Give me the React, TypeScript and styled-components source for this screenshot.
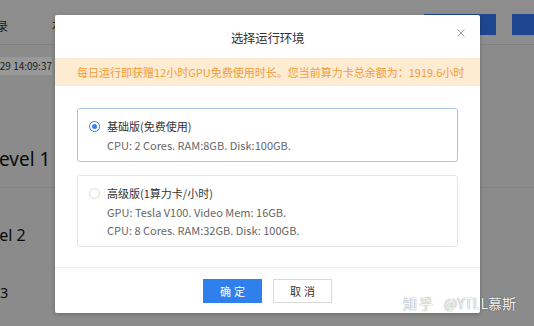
import styled, { createGlobalStyle } from "styled-components";

const GlobalStyle = createGlobalStyle`
  html, body {
    margin: 0;
    padding: 0;
  }
  body {
    font-family: "Noto Sans CJK SC", "Noto Sans", sans-serif;
    width: 534px;
    height: 326px;
    overflow: hidden;
  }
`;

const Page = styled.div`
  position: relative;
  width: 534px;
  height: 326px;
  background: #e8e8e8;
  overflow: hidden;
`;

const Header = styled.div`
  height: 44px;
  border-bottom: 1px solid #d6d6d6;
  background: #ececec;
  display: flex;
  align-items: center;
`;

const Tab = styled.span<{ $left: number }>`
  font-size: 12px;
  color: #333;
  margin-left: ${({ $left }) => $left}px;
  margin-top: 6px;
`;

const HeaderButtons = styled.div`
  margin-left: auto;
  margin-right: -50px;
  display: flex;
  gap: 16px;
  align-self: flex-start;
  margin-top: 14px;
`;

const BlueButton = styled.div`
  width: 72px;
  height: 21px;
  background: #3276f0;
`;

const StampRow = styled.div`
  padding-top: 12px;
  height: 28px;
`;

const Stamp = styled.div`
  width: 52px;
  height: 18px;
  background: #fff;
  font-size: 10px;
  line-height: 18px;
  color: #333;
  white-space: nowrap;
  overflow: hidden;
  display: flex;
  justify-content: flex-end;
`;

const Level = styled.div<{ $size: number; $height: number; $shift: number; $bottom?: number }>`
  height: ${({ $height }) => $height}px;
  box-sizing: border-box;
  display: flex;
  align-items: ${({ $bottom }) => ($bottom !== undefined ? "flex-end" : "center")};
  padding-bottom: ${({ $bottom }) => $bottom ?? 0}px;
  font-family: "Noto Sans", sans-serif;
  font-size: ${({ $size }) => $size}px;
  line-height: 24px;
  color: #111;
  white-space: nowrap;
  margin-left: ${({ $shift }) => $shift}px;
`;

const Divider = styled.div`
  height: 1px;
  background: #dcdcdc;
`;

const Overlay = styled.div`
  position: absolute;
  inset: 0;
  background: rgba(0, 0, 0, 0.4);
`;

const Modal = styled.div`
  position: absolute;
  left: 55px;
  top: 15px;
  width: 425px;
  height: 298px;
  background: #fff;
  border-radius: 2px;
  box-shadow: 0 1px 4px rgba(0, 0, 0, 0.25);
  display: flex;
  flex-direction: column;
`;

const ModalHeader = styled.div`
  position: relative;
  height: 42px;
  display: flex;
  align-items: center;
  justify-content: center;
  padding-top: 1px;
`;

const Title = styled.div`
  font-size: 12.5px;
  color: #333;
  letter-spacing: -0.3px;
`;

const Close = styled.div`
  position: absolute;
  right: 15px;
  top: 14px;
  width: 8px;
  height: 8px;
  display: flex;
`;

const Notice = styled.div`
  height: 28px;
  background: #fdebd2;
  color: #f29d38;
  font-size: 11px;
  line-height: 28px;
  padding-left: 22px;
  white-space: nowrap;
`;

const Body = styled.div`
  padding: 22px 22px 0;
  display: flex;
  flex-direction: column;
  gap: 13px;
  height: 181px;
  box-sizing: border-box;
`;

const Card = styled.div<{ $active?: boolean }>`
  border: 1px solid ${({ $active }) => ($active ? "#a9c6ea" : "#e4e4e4")};
  border-radius: 3px;
  padding: 8px 0 7px 11px;
`;

const OptionRow = styled.div`
  display: flex;
  align-items: center;
  height: 18px;
  gap: 7px;
`;

const Radio = styled.span<{ $checked?: boolean }>`
  width: 9px;
  height: 9px;
  border-radius: 50%;
  border: 1px solid ${({ $checked }) => ($checked ? "#3a7ee6" : "#dcdcdc")};
  display: flex;
  align-items: center;
  justify-content: center;
  &::after {
    content: "";
    width: 5px;
    height: 5px;
    border-radius: 50%;
    background: ${({ $checked }) => ($checked ? "#3a7ee6" : "transparent")};
  }
`;

const Label = styled.span`
  font-size: 11px;
  color: #333;
`;

const Spec = styled.div<{ $first?: boolean }>`
  font-size: 11px;
  color: #666;
  line-height: 18px;
  padding-left: 18px;
  margin-top: ${({ $first }) => ($first ? 1 : 0)}px;
`;

const Footer = styled.div`
  border-top: 1px solid #ececec;
  display: flex;
  justify-content: center;
  gap: 11px;
  padding-top: 11px;
`;

const Button = styled.button<{ $primary?: boolean }>`
  width: 59px;
  height: 24px;
  border: 1px solid ${({ $primary }) => ($primary ? "#2f80ed" : "#d9d9d9")};
  background: ${({ $primary }) => ($primary ? "#2f80ed" : "#fff")};
  color: ${({ $primary }) => ($primary ? "#fff" : "#333")};
  font-family: "Noto Sans CJK SC", sans-serif;
  font-size: 11px;
  letter-spacing: 3px;
  padding: 0 0 0 3px;
  border-radius: 0;
  cursor: pointer;
`;

const Watermark = styled.div`
  position: absolute;
  left: 403px;
  top: 293px;
  display: flex;
  gap: 9px;
  font-size: 14px;
  line-height: 20px;
  color: rgba(255, 255, 255, 0.95);
  text-shadow: 0 0 1px rgba(0, 0, 0, 0.5), 0 0 2px rgba(0, 0, 0, 0.15);
  white-space: nowrap;
`;

const Brand = styled.span`
  letter-spacing: 2px;
`;

export default function App() {
  return (
    <Page>
      <GlobalStyle />
      <Header>
        <Tab $left={-4}>录</Tab>
        <Tab $left={44}>右</Tab>
        <HeaderButtons>
          <BlueButton />
          <BlueButton />
        </HeaderButtons>
      </Header>
      <StampRow>
        <Stamp>2019-04-29 14:09:37</Stamp>
      </StampRow>
      <Level $size={19} $height={102} $bottom={16} $shift={-11}>
        Level 1
      </Level>
      <Divider />
      <Level $size={16} $height={94} $shift={-26}>
        Level 2
      </Level>
      <Level $size={14} $height={22} $shift={-37}>
        Level 3
      </Level>

      <Overlay />

      <Modal>
        <ModalHeader>
          <Title>选择运行环境</Title>
          <Close>
            <svg width="8" height="8" viewBox="0 0 8 8">
              <path d="M0.5 0.5L7.5 7.5M7.5 0.5L0.5 7.5" stroke="#9a9a9a" strokeWidth="1" />
            </svg>
          </Close>
        </ModalHeader>
        <Notice>每日运行即获赠12小时GPU免费使用时长。您当前算力卡总余额为：1919.6小时</Notice>
        <Body>
          <Card $active>
            <OptionRow>
              <Radio $checked />
              <Label>基础版(免费使用)</Label>
            </OptionRow>
            <Spec $first>CPU: 2 Cores. RAM:8GB. Disk:100GB.</Spec>
          </Card>
          <Card>
            <OptionRow>
              <Radio />
              <Label>高级版(1算力卡/小时)</Label>
            </OptionRow>
            <Spec $first>GPU: Tesla V100. Video Mem: 16GB.</Spec>
            <Spec>CPU: 8 Cores. RAM:32GB. Disk: 100GB.</Spec>
          </Card>
        </Body>
        <Footer>
          <Button $primary>确定</Button>
          <Button>取消</Button>
        </Footer>
      </Modal>

      <Watermark>
        <Brand>知乎</Brand>
        <span>@YTLL慕斯</span>
      </Watermark>
    </Page>
  );
}
